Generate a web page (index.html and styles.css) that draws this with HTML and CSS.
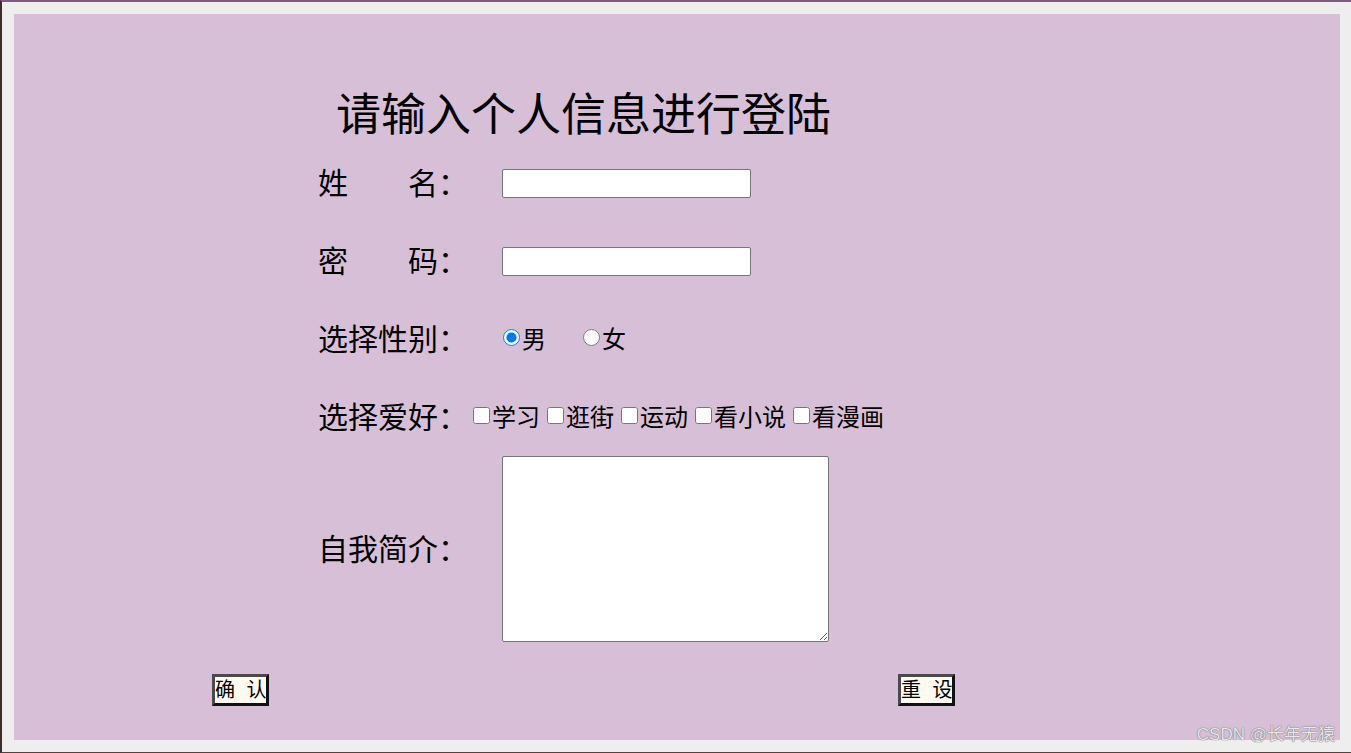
FILE: index.html
```html
<!DOCTYPE html>
<html lang="zh">
<head>
<meta charset="utf-8">
<title>登陆</title>
<link rel="stylesheet" href="styles.css">
</head>
<body>
<div class="frame">
  <div class="page">
    <h1 class="title">请输入个人信息进行登陆</h1>
    <form class="form">
      <div class="row">
        <span class="label">姓&emsp;&emsp;名：</span>
        <input class="text-input" type="text">
      </div>
      <div class="row">
        <span class="label">密&emsp;&emsp;码：</span>
        <input class="text-input" type="password">
      </div>
      <div class="row">
        <span class="label">选择性别：</span>
        <div class="options gender">
          <label class="opt"><input class="radio" type="radio" name="sex" checked>男</label>
          <label class="opt"><input class="radio" type="radio" name="sex">女</label>
        </div>
      </div>
      <div class="row">
        <span class="label label-narrow">选择爱好：</span>
        <div class="options hobbies">
          <label class="opt"><input class="check" type="checkbox">学习</label>
          <label class="opt"><input class="check" type="checkbox">逛街</label>
          <label class="opt"><input class="check" type="checkbox">运动</label>
          <label class="opt"><input class="check" type="checkbox">看小说</label>
          <label class="opt"><input class="check" type="checkbox">看漫画</label>
        </div>
      </div>
      <div class="row row-auto">
        <span class="label">自我简介：</span>
        <textarea class="intro"></textarea>
      </div>
      <div class="buttons">
        <button class="btn" type="submit">确 认</button>
        <button class="btn" type="reset">重 设</button>
      </div>
    </form>
  </div>
  <div class="watermark">CSDN @长年无猿</div>
</div>
</body>
</html>
```

FILE: styles.css
```css
html, body {
  margin: 0;
  padding: 0;
  height: 753px;
  overflow: hidden;
  background: #eeeeee;
}

.frame {
  position: relative;
  box-sizing: border-box;
  height: 753px;
  border-top: 2px solid #7d5c80;
  border-left: 2px solid #3b2b2e;
  border-bottom: 1px solid #5a4038;
  padding: 12px 11px 12px 12px;
  font-family: "Noto Sans CJK SC", "Liberation Sans", sans-serif;
  color: #000;
}

.page {
  height: 726px;
  background: #d8bfd8;
  box-sizing: border-box;
  padding-top: 67px;
}

.title {
  margin: 0 0 0 322px;
  font-size: 45px;
  font-weight: normal;
  line-height: 62px;
  height: 63px;
}

.form {
  margin: 0;
}

.row {
  display: flex;
  align-items: center;
  height: 78px;
  margin-left: 304px;
}

.row-auto {
  height: auto;
}

.label {
  width: 184px;
  flex: none;
  font-size: 30px;
  line-height: 40px;
  padding-bottom: 4px;
  white-space: nowrap;
}

.label-narrow {
  width: 155px;
}

.text-input {
  box-sizing: border-box;
  width: 249px;
  height: 29px;
  margin: 0;
  border: 1px solid #767676;
  border-radius: 2px;
  background: #fff;
}

.options {
  display: flex;
  align-items: center;
  font-size: 24px;
  line-height: 30px;
  padding-bottom: 2px;
}

.gender {
  gap: 37px;
  margin-left: 1px;
}

.hobbies {
  gap: 7px;
}

.opt {
  display: flex;
  align-items: center;
  white-space: nowrap;
}

.radio,
.check {
  width: 17px;
  height: 17px;
  margin: 0 2px 2px 0;
}

.intro {
  box-sizing: border-box;
  width: 327px;
  height: 186px;
  margin: 0;
  border: 1px solid #767676;
  border-radius: 2px;
  background: #fff;
  display: block;
}

.buttons {
  display: flex;
  gap: 629px;
  margin-top: 32px;
  padding-left: 198px;
}

.btn {
  box-sizing: border-box;
  width: 57px;
  height: 32px;
  margin: 0;
  padding: 0 0 2px 0;
  font-family: "Noto Sans CJK SC", sans-serif;
  font-size: 20px;
  line-height: 24px;
  word-spacing: 7px;
  white-space: nowrap;
  color: #000;
  background: #fffaf0;
  border-style: solid;
  border-width: 3px;
  border-color: #4a4a4a #111 #111 #4a4a4a;
}

.watermark {
  position: absolute;
  right: 16px;
  bottom: 6px;
  font-family: "Liberation Sans", "Noto Sans CJK SC", sans-serif;
  font-size: 17px;
  line-height: 22px;
  color: #e8e8e8;
  text-shadow: 0 0 1px #6a6a6a, 0 0 1px #6a6a6a;
}
```
